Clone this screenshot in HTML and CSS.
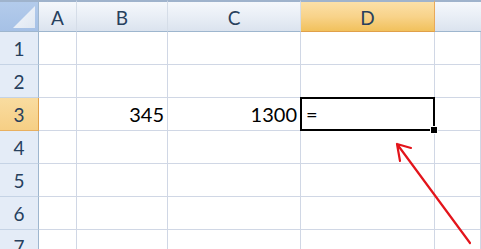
FILE: index.html
```html
<!DOCTYPE html>
<html>
<head>
<meta charset="utf-8">
<link rel="stylesheet" href="styles.css">
</head>
<body>
<div class="sheet">
  <div class="grid">
    <div class="corner"><div class="tri"></div></div>
    <div class="colh">A</div>
    <div class="colh">B</div>
    <div class="colh">C</div>
    <div class="colh sel">D</div>
    <div class="colh last"></div>

    <div class="rowh">1</div><div class="c"></div><div class="c"></div><div class="c"></div><div class="c"></div><div class="c"></div>
    <div class="rowh">2</div><div class="c"></div><div class="c"></div><div class="c"></div><div class="c"></div><div class="c"></div>
    <div class="rowh sel">3</div><div class="c"></div><div class="c num">345</div><div class="c num">1300</div><div class="c txt">=</div><div class="c"></div>
    <div class="rowh">4</div><div class="c"></div><div class="c"></div><div class="c"></div><div class="c"></div><div class="c"></div>
    <div class="rowh">5</div><div class="c"></div><div class="c"></div><div class="c"></div><div class="c"></div><div class="c"></div>
    <div class="rowh">6</div><div class="c"></div><div class="c"></div><div class="c"></div><div class="c"></div><div class="c"></div>
    <div class="rowh">7</div><div class="c"></div><div class="c"></div><div class="c"></div><div class="c"></div><div class="c"></div>
  </div>
  <div class="selbox"><div class="handle"></div></div>
  <svg class="arrow" width="481" height="249" viewBox="0 0 481 249">
    <path d="M470 243 L397 144 M397 144 L411 148 M397 144 L400 161" stroke="#e3141b" stroke-width="2.2" fill="none" stroke-linecap="round"/>
  </svg>
</div>
</body>
</html>
```
FILE: styles.css
```css
html, body {
  margin: 0;
  padding: 0;
  background: #fff;
  overflow: hidden;
}
.sheet {
  position: relative;
  width: 481px;
  height: 249px;
  overflow: hidden;
  font-family: Lato, "Open Sans", "Liberation Sans", sans-serif;
}
.grid {
  display: grid;
  grid-template-columns: 39px 38px 91px 133px 134px 1fr;
  grid-template-rows: 32px repeat(7, 33px);
}
.grid > div {
  box-sizing: border-box;
}
.corner {
  position: relative;
  background: linear-gradient(#b3cbeb, #a6c1e6);
  border-top: 2px solid #9fb3cc;
  border-right: 1px solid #9eb6ce;
  border-bottom: 1px solid #9eb6ce;
}
.tri {
  position: absolute;
  right: 3px;
  bottom: 3px;
  width: 22px;
  height: 22px;
  background: linear-gradient(135deg, #f4f7fb, #dfe7f2);
  clip-path: polygon(100% 0, 100% 100%, 0 100%);
}
.colh {
  background: linear-gradient(#f5f8fc, #e6ecf4 60%, #dbe3ee);
  border-top: 2px solid #9fb3cc;
  border-right: 1px solid #d5dde8;
  border-bottom: 1px solid #9eb6ce;
  color: #27405d;
  font-size: 19px;
  display: flex;
  align-items: center;
  justify-content: center;
  padding-top: 1px;
}
.colh.sel {
  background: linear-gradient(#fbe0a8, #f8d38a 50%, #f1c15c);
  border-right: 1px solid #e8a95a;
  border-bottom: 1px solid #e0a04a;
}
.colh.last {
  border-right: none;
}
.rowh {
  background: #e4ecf7;
  border-right: 1px solid #9eb6ce;
  border-bottom: 1px solid #c5d3e5;
  color: #27405d;
  font-size: 19px;
  display: flex;
  align-items: center;
  justify-content: center;
}
.rowh.sel {
  background: linear-gradient(#f9dca0, #f6cf85);
  border-right: 1px solid #e0a04a;
  border-bottom: 1px solid #e8b060;
}
.c {
  border-right: 1px solid #d0d7e5;
  border-bottom: 1px solid #d0d7e5;
  font-size: 20px;
  color: #000;
  display: flex;
  align-items: center;
}
.c.num {
  justify-content: flex-end;
  padding-right: 3px;
}
.c.txt {
  padding-left: 5px;
}
.selbox {
  position: absolute;
  left: 300px;
  top: 97px;
  width: 135px;
  height: 34px;
  box-sizing: border-box;
  border: 2px solid #000;
}
.handle {
  position: absolute;
  right: -5px;
  bottom: -5px;
  width: 6px;
  height: 6px;
  background: #000;
  border: 1px solid #fff;
  box-sizing: content-box;
}
.arrow {
  position: absolute;
  left: 0;
  top: 0;
}
```
